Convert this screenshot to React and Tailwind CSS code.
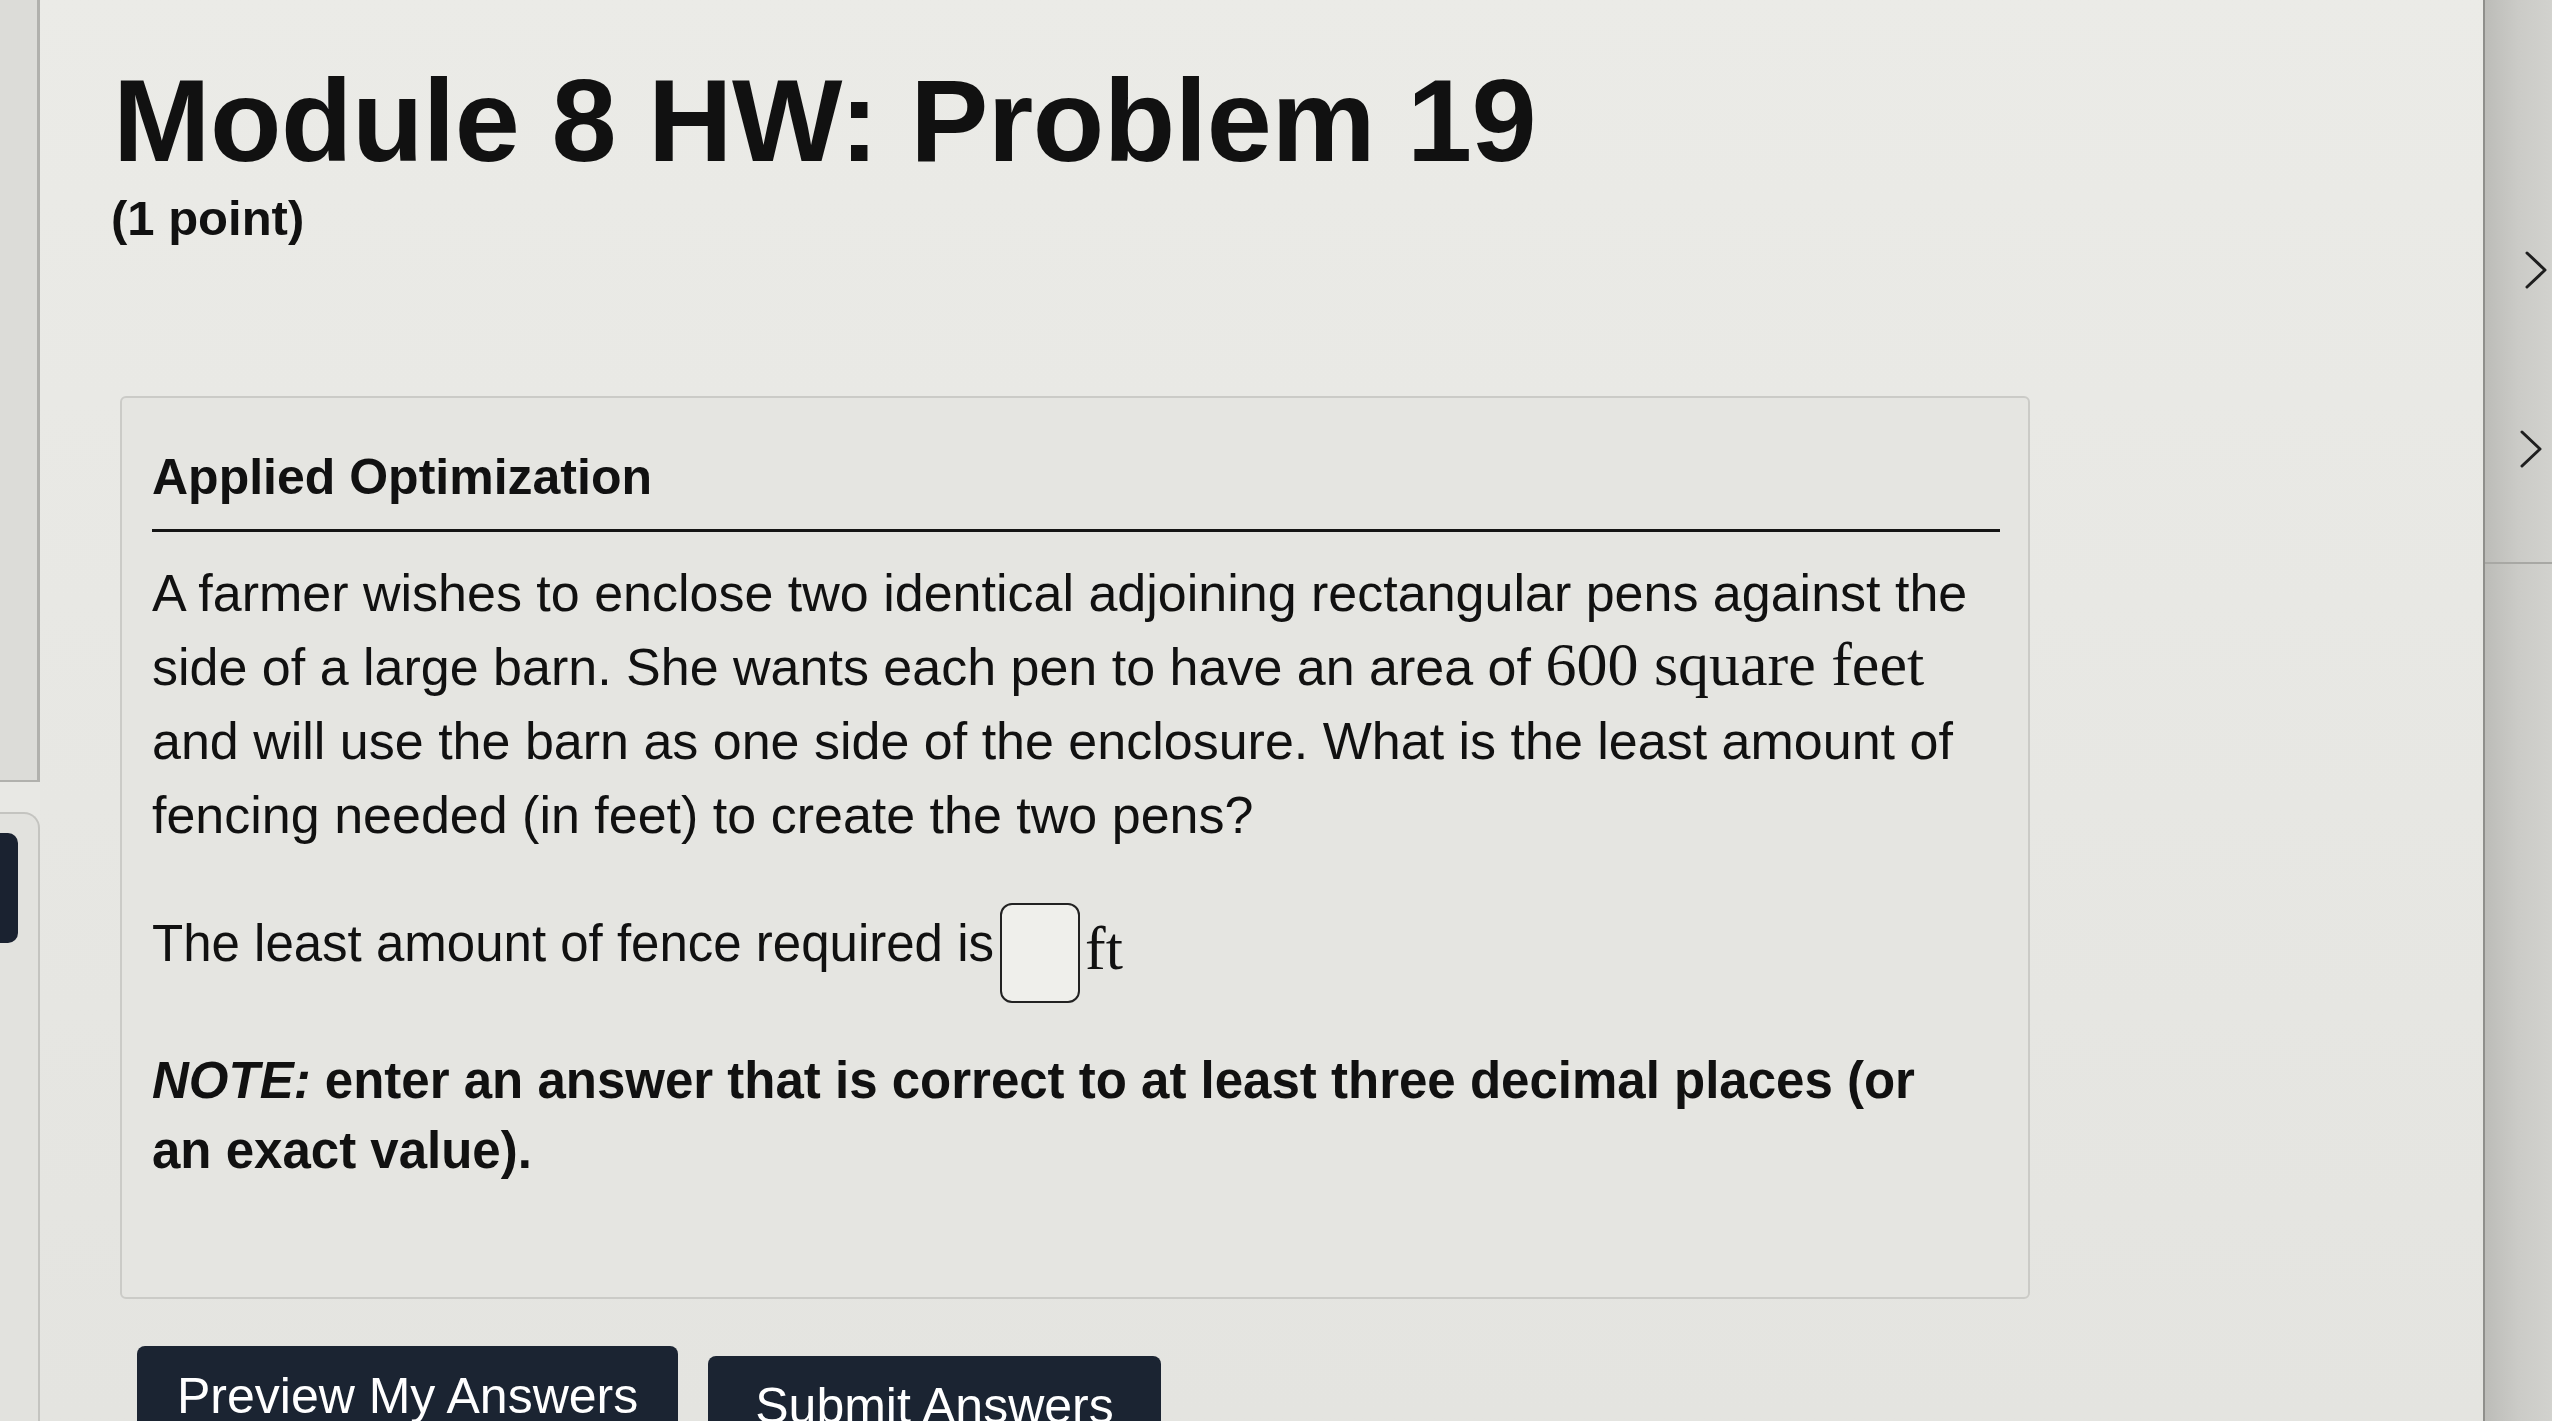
import React from 'react';

function Chevron({ className }) {
  return (
    <svg className={className} width="24" height="38" viewBox="0 0 24 38" fill="none">
      <polyline points="3,2 21,19 3,36" stroke="#1f1f1f" strokeWidth="3" strokeLinecap="round" strokeLinejoin="round" />
    </svg>
  );
}

export default function App() {
  return (
    <div className="flex h-[1421px] w-full overflow-hidden bg-[#e8e8e4] font-['Liberation_Sans',Arial,sans-serif] text-[#111]">
      {/* left rail */}
      <div className="flex w-[40px] shrink-0 flex-col">
        <div className="h-[782px] border-r-[3px] border-b-2 border-[#b1b1ad] bg-[#dcdcd8]" />
        <div className="mt-[30px] flex-1 rounded-tr-[16px] border-t-2 border-r-2 border-[#c4c4c0] bg-[#e2e2de] pt-[19px]">
          <div className="h-[110px] w-[18px] rounded-r-[10px] bg-[#1a2230]" />
        </div>
      </div>

      {/* problem page */}
      <main className="flex-1 border-r-2 border-[#8f8f8b] bg-gradient-to-b from-[#ebebe7] to-[#e4e4e0] pl-[66px] pt-[62px]">
        <h1 className="ml-[7px] text-[117px] font-bold leading-none tracking-[-0.5px]">Module 8 HW: Problem 19</h1>
        <p className="ml-[5px] mt-[10px] text-[49px] font-bold leading-[1.2]">(1 point)</p>

        <section className="ml-[14px] mt-[148px] w-[1910px] rounded-[6px] border-2 border-[#cbcbc7] bg-[#e5e5e1] pt-[49px] pr-[28px] pb-[111px] pl-[30px]">
          <h2 className="text-[50px] font-bold leading-[60px]">Applied Optimization</h2>
          <div className="mt-[22px] h-[3px] bg-[#151515]" />

          <p className="mt-[24px] text-[52px] leading-[74px]">
            A farmer wishes to enclose two identical adjoining rectangular pens against the
            <br />
            side of a large barn. She wants each pen to have an area of{' '}
            <span className="font-['Liberation_Serif',serif] text-[62px] leading-none">600 square feet</span>
            <br />
            and will use the barn as one side of the enclosure. What is the least amount of
            <br />
            fencing needed (in feet) to create the two pens?
          </p>

          <div className="mt-[51px] flex h-[100px] items-start">
            <span className="mt-[15px] text-[51px] leading-none">The least amount of fence required is</span>
            <span className="ml-[6px] h-[100px] w-[80px] rounded-[12px] border-2 border-[#222] bg-[#efefeb]" />
            <span className="ml-[5px] mt-[14px] font-['Liberation_Serif',serif] text-[62px] leading-none">ft</span>
          </div>

          <p className="mt-[43px] text-[51px] font-bold leading-[70px]">
            <i>NOTE:</i> enter an answer that is correct to at least three decimal places (or
            <br />
            an exact value).
          </p>
        </section>

        <div className="ml-[31px] mt-[47px] flex items-start gap-[30px]">
          <button className="rounded-t-[8px] bg-[#1b2432] px-[40px] pt-[20px] pb-[20px] text-[50px] leading-[60px] text-white">
            Preview My Answers
          </button>
          <button className="mt-[10px] rounded-t-[8px] bg-[#1b2432] px-[47px] pt-[20px] pb-[20px] text-[50px] leading-[60px] text-white">
            Submit Answers
          </button>
        </div>
      </main>

      {/* right sidebar */}
      <aside className="flex w-[67px] shrink-0 flex-col bg-gradient-to-r from-[#bcbcb8] via-[#cbcbc7] to-[#d2d2ce]">
        <Chevron className="ml-[39px] mt-[251px]" />
        <Chevron className="ml-[34px] mt-[141px]" />
        <div className="mt-[94px] h-[2px] w-full bg-[#a8a8a4]" />
      </aside>
    </div>
  );
}
